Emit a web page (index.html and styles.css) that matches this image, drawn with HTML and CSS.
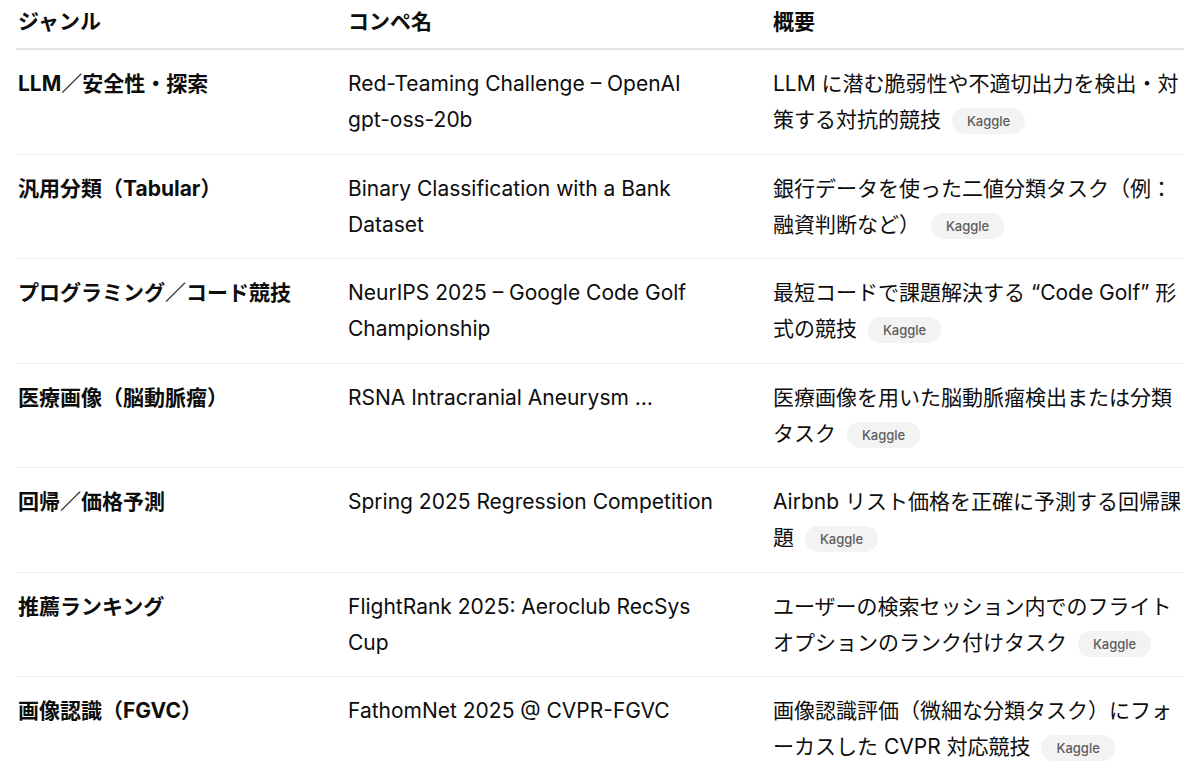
FILE: index.html
```html
<!DOCTYPE html>
<html lang="ja">
<head>
<meta charset="utf-8">
<link rel="stylesheet" href="styles.css">
</head>
<body>
<table class="comp-table">
  <colgroup>
    <col class="c-genre">
    <col class="c-name">
    <col class="c-desc">
  </colgroup>
  <thead>
    <tr><th>ジャンル</th><th>コンペ名</th><th>概要</th></tr>
  </thead>
  <tbody>
    <tr>
      <td class="genre">LLM／安全性・探索</td>
      <td class="name">Red-Teaming Challenge – OpenAI gpt-oss-20b</td>
      <td>LLM に潜む脆弱性や不適切出力を検出・対策する対抗的競技 <span class="badge">Kaggle</span></td>
    </tr>
    <tr>
      <td class="genre">汎用分類（Tabular）</td>
      <td class="name">Binary Classification with a Bank Dataset</td>
      <td>銀行データを使った二値分類タスク（例：融資判断など） <span class="badge">Kaggle</span></td>
    </tr>
    <tr>
      <td class="genre">プログラミング／コード競技</td>
      <td class="name">NeurIPS 2025 – Google Code Golf Championship</td>
      <td>最短コードで課題解決する “Code Golf” 形<br>式の競技 <span class="badge">Kaggle</span></td>
    </tr>
    <tr>
      <td class="genre">医療画像（脳動脈瘤）</td>
      <td class="name">RSNA Intracranial Aneurysm …</td>
      <td>医療画像を用いた脳動脈瘤検出または分類タスク <span class="badge">Kaggle</span></td>
    </tr>
    <tr>
      <td class="genre">回帰／価格予測</td>
      <td class="name">Spring 2025 Regression Competition</td>
      <td>Airbnb リスト価格を正確に予測する回帰課題 <span class="badge">Kaggle</span></td>
    </tr>
    <tr>
      <td class="genre">推薦ランキング</td>
      <td class="name">FlightRank 2025: Aeroclub RecSys Cup</td>
      <td>ユーザーの検索セッション内でのフライトオプションのランク付けタスク <span class="badge">Kaggle</span></td>
    </tr>
    <tr>
      <td class="genre">画像認識（FGVC）</td>
      <td class="name">FathomNet 2025 @ CVPR-FGVC</td>
      <td>画像認識評価（微細な分類タスク）にフォーカスした CVPR 対応競技 <span class="badge">Kaggle</span></td>
    </tr>
  </tbody>
</table>
</body>
</html>
```

FILE: styles.css
```css
html, body {
  margin: 0;
  padding: 0;
  background: #ffffff;
}
body {
  padding: 0 16px;
  font-family: "Inter", "Noto Sans CJK JP", sans-serif;
  color: #0d0d0d;
  font-size: 21px;
  line-height: 36px;
}
.comp-table {
  width: 1168px;
  border-collapse: collapse;
  table-layout: fixed;
}
.c-genre { width: 324px; }
.c-name { width: 425px; }
.c-desc { width: 419px; }
.comp-table th {
  text-align: left;
  font-weight: 700;
  padding: 4px 8px 8px 8px;
  border-bottom: 2px solid #e3e3e3;
}
.comp-table td {
  vertical-align: top;
  padding: 16px 8px 15.5px 8px;
  border-bottom: 1px solid #efefef;
}
.comp-table th:first-child,
.comp-table td:first-child {
  padding-left: 2px;
}
.comp-table td.name {
  padding-right: 46px;
}
.comp-table td:last-child,
.comp-table th:last-child {
  padding-right: 0;
}
.comp-table tbody tr:last-child td {
  border-bottom: none;
}
.genre {
  font-weight: 700;
}
.badge {
  display: inline-block;
  margin-left: 5px;
  padding: 0 15px;
  height: 26px;
  line-height: 26px;
  border-radius: 13px;
  background: #f3f3f3;
  color: #5d5d5d;
  font-size: 13px;
  font-weight: 500;
  vertical-align: 1px;
}
```
